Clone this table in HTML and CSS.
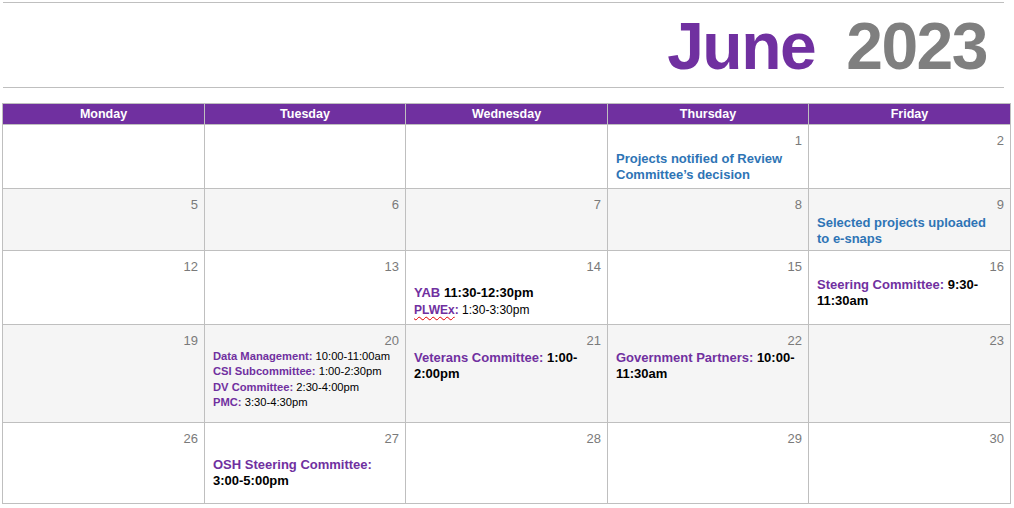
FILE: index.html
```html
<!DOCTYPE html>
<html>
<head>
<meta charset="utf-8">
<link rel="stylesheet" href="styles.css">
</head>
<body>
<div class="page">
  <header class="masthead">
    <h1 class="title"><span class="month">June</span><span class="year">2023</span></h1>
  </header>
  <div class="calendar">
    <div class="dow">Monday</div>
    <div class="dow">Tuesday</div>
    <div class="dow">Wednesday</div>
    <div class="dow">Thursday</div>
    <div class="dow">Friday</div>

    <div class="day"></div>
    <div class="day"></div>
    <div class="day"></div>
    <div class="day"><div class="num">1</div><div class="ev blue">Projects notified of Review<br>Committee’s decision</div></div>
    <div class="day"><div class="num">2</div></div>

    <div class="day shade"><div class="num">5</div></div>
    <div class="day shade"><div class="num">6</div></div>
    <div class="day shade"><div class="num">7</div></div>
    <div class="day shade"><div class="num">8</div></div>
    <div class="day shade"><div class="num">9</div><div class="ev blue">Selected projects uploaded<br>to e-snaps</div></div>

    <div class="day"><div class="num">12</div></div>
    <div class="day"><div class="num">13</div></div>
    <div class="day"><div class="num">14</div>
      <div class="ev spaced"><span class="purple">YAB</span> 11:30-12:30pm</div>
      <div class="ev small"><span class="purple squiggle">PLWEx</span><span class="purple">:</span> <span class="reg">1:30-3:30pm</span></div>
    </div>
    <div class="day"><div class="num">15</div></div>
    <div class="day"><div class="num">16</div><div class="ev"><span class="purple">Steering Committee:</span> 9:30-<br>11:30am</div></div>

    <div class="day shade"><div class="num">19</div></div>
    <div class="day shade"><div class="num">20</div>
      <div class="list">
        <div><span class="purple">Data Management:</span> <span class="reg">10:00-11:00am</span></div>
        <div><span class="purple">CSI Subcommittee:</span> <span class="reg">1:00-2:30pm</span></div>
        <div><span class="purple">DV Committee:</span> <span class="reg">2:30-4:00pm</span></div>
        <div><span class="purple">PMC:</span> <span class="reg">3:30-4:30pm</span></div>
      </div>
    </div>
    <div class="day shade"><div class="num">21</div><div class="ev tight"><span class="purple">Veterans Committee:</span> 1:00-<br>2:00pm</div></div>
    <div class="day shade"><div class="num">22</div><div class="ev tight"><span class="purple">Government Partners:</span> 10:00-<br>11:30am</div></div>
    <div class="day shade"><div class="num">23</div></div>

    <div class="day"><div class="num">26</div></div>
    <div class="day"><div class="num">27</div><div class="ev spaced"><span class="purple">OSH Steering Committee:</span><br>3:00-5:00pm</div></div>
    <div class="day"><div class="num">28</div></div>
    <div class="day"><div class="num">29</div></div>
    <div class="day"><div class="num">30</div></div>
  </div>
</div>
</body>
</html>
```
FILE: styles.css
```css
html, body {
  margin: 0;
  padding: 0;
  background: #ffffff;
}

body {
  font-family: "Liberation Sans", Arial, sans-serif;
  color: #000000;
}

.page {
  padding-top: 2px;
}

.masthead {
  margin-left: 3px;
  width: 1001px;
  height: 84px;
  border-top: 1px solid #bfbfbf;
  border-bottom: 1px solid #bfbfbf;
  box-sizing: content-box;
}

.title {
  margin: 0;
  padding: 10px 17px 0 0;
  display: flex;
  justify-content: flex-end;
  font-family: "Liberation Sans", Arial, sans-serif;
  font-weight: bold;
  font-size: 66px;
  line-height: 66px;
  letter-spacing: -1.5px;
}

.month {
  color: #7030a0;
}

.year {
  color: #7f7f7f;
  margin-left: 31px;
}

.calendar {
  margin-top: 15px;
  margin-left: 2px;
  display: grid;
  grid-template-columns: 201px 200px 201px 200px 201px;
  grid-template-rows: 20px 63px 61px 73px 97px 80px;
  gap: 1px;
  padding: 1px;
  width: max-content;
  background: #bfbfbf;
}

.dow {
  background: #7030a0;
  color: #ffffff;
  font-weight: bold;
  font-size: 12.5px;
  line-height: 20px;
  text-align: center;
}

.day {
  background: #ffffff;
  padding: 8px 6px 0 8px;
  overflow: hidden;
}

.day.shade {
  background: #f5f5f5;
}

.num {
  text-align: right;
  font-size: 13px;
  line-height: 16px;
  color: #7a7a7a;
}

.ev {
  margin-top: 2px;
  font-size: 13px;
  line-height: 16px;
  font-weight: bold;
  color: #000000;
}

.ev.tight {
  margin-top: 1px;
}

.ev.spaced {
  margin-top: 10px;
}

.ev.small {
  margin-top: 1px;
  font-size: 12px;
  line-height: 16px;
}

.ev.blue {
  color: #2e74b5;
}

.purple {
  color: #7030a0;
}

.reg {
  font-weight: normal;
}

.squiggle {
  text-decoration: underline wavy #e00000;
  text-decoration-thickness: 1px;
  text-underline-offset: 2px;
}

.list {
  font-size: 11.2px;
  line-height: 15.4px;
  font-weight: bold;
}
```
